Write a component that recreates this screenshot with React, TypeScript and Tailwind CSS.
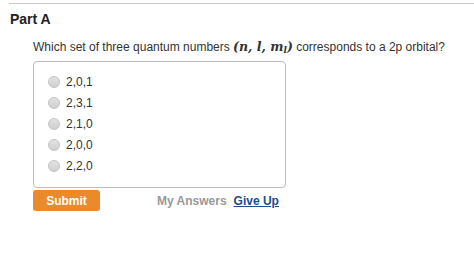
export default function App() {
  const options = ['2,0,1', '2,3,1', '2,1,0', '2,0,0', '2,2,0'];

  return (
    <div className="h-[270px] w-[474px] bg-white pt-[3px] font-['Liberation_Sans',Arial,sans-serif] text-[#333]">
      <div className="ml-[9px] border-t border-[#c8c8c8]" />
      <div className="pl-[10px] pt-[7px]">
        <h2 className="text-[14px] font-bold leading-[16px] text-[#222]">Part A</h2>
        <div className="pl-[23px]">
          <p className="mt-[12px] text-[12px] leading-[16px]">
            Which set of three quantum numbers{' '}
            <span className="font-['DejaVu_Serif',serif] text-[12.5px] font-bold italic">
              (n, l, m<sub className="text-[9px]">l</sub>)
            </span>{' '}
            corresponds to a 2p orbital?
          </p>
          <div className="mt-[6px] flex h-[127px] w-[253px] flex-col gap-[8px] rounded-[4px] border border-[#bdbdbd] pl-[14px] pt-[13px]">
            {options.map((o) => (
              <label key={o} className="flex h-[13px] items-center gap-[6px] text-[12px]">
                <span className="h-[12px] w-[12px] rounded-full border border-[#c4c4c4] bg-gradient-to-b from-[#e2e2e2] to-[#cfcfcf]" />
                <span>{o}</span>
              </label>
            ))}
          </div>
          <div className="mt-[2px] flex items-center">
            <button className="h-[21px] w-[67px] rounded-[3px] bg-[#ea8a2c] text-[12px] font-bold text-white">
              Submit
            </button>
            <span className="ml-[57px] text-[12px] font-bold text-[#999]">My Answers</span>
            <a className="ml-[7px] text-[12px] font-bold text-[#1b4e8e] underline">Give Up</a>
          </div>
        </div>
      </div>
    </div>
  );
}
